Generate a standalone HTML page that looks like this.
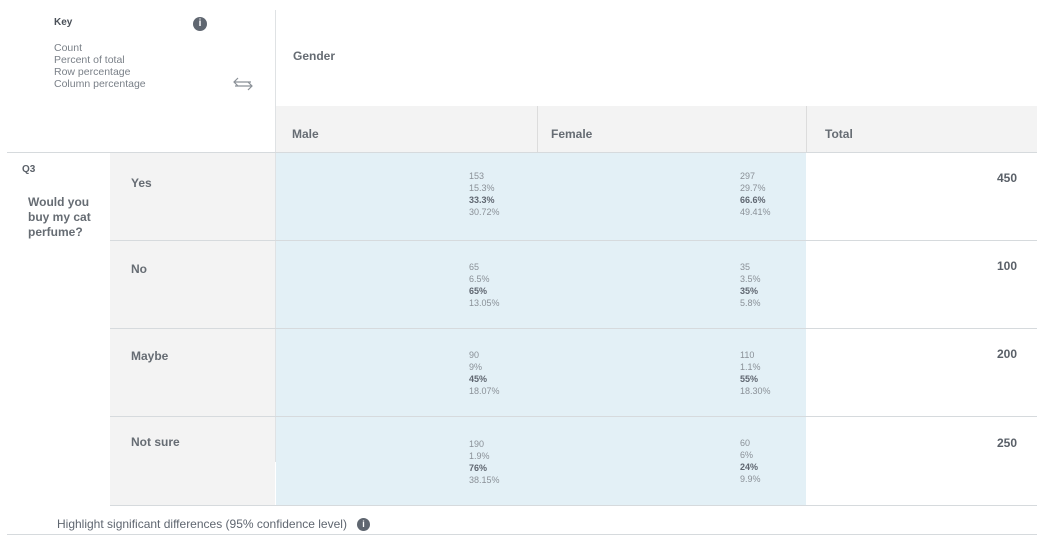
<!DOCTYPE html>
<html><head><style>
body{margin:0;width:1055px;height:550px;background:#fff;font-family:"Liberation Sans",sans-serif;color:#5f6670;position:relative;overflow:hidden}
.a{position:absolute}
.d{position:absolute;font-size:9px;line-height:12px;color:#8a9097}
.d b{color:#5f6670}
.tot{position:absolute;right:38px;font-size:12px;font-weight:bold;color:#5a6068}
.rl{position:absolute;left:131px;font-size:12px;font-weight:bold;color:#666c73}
.hl{position:absolute;height:1px;background:#d6dadd}
</style></head><body>
<div class="a" style="left:54px;top:17px;font-size:10px;font-weight:bold;color:#4a5058">Key</div>
<div class="a" style="left:54px;top:42px;font-size:10.5px;line-height:12px;color:#7a8088">Count<br>Percent of total<br>Row percentage<br>Column percentage</div>
<div class="a" style="left:193px;top:17px;width:14px;height:14px;border-radius:50%;background:#5f6670;color:#fff;font-size:10px;font-weight:bold;text-align:center;line-height:14px">i</div>
<svg class="a" style="left:233px;top:77px" width="20" height="14" viewBox="0 0 20 14"><path d="M5 1 L1 5 L5 9 M1 5 H18 M15 5 L19 9 L15 13 M19 9 H2" fill="none" stroke="#8a9097" stroke-width="1.2"/></svg>
<div class="a" style="left:275px;top:10px;width:1px;height:452px;background:#dfe2e4"></div>
<div class="a" style="left:293px;top:49px;font-size:12px;font-weight:bold;color:#666c73">Gender</div>
<div class="a" style="left:276px;top:106px;width:761px;height:46px;background:#f3f3f3"></div>
<div class="a" style="left:537px;top:106px;width:1px;height:46px;background:#dcdcdc"></div>
<div class="a" style="left:806px;top:106px;width:1px;height:46px;background:#dcdcdc"></div>
<div class="a" style="left:292px;top:127px;font-size:12px;font-weight:bold;color:#666c73">Male</div>
<div class="a" style="left:551px;top:127px;font-size:12px;font-weight:bold;color:#666c73">Female</div>
<div class="a" style="left:825px;top:127px;font-size:12px;font-weight:bold;color:#666c73">Total</div>
<div class="a" style="left:110px;top:152px;width:165px;height:353px;background:#f3f3f3"></div>
<div class="a" style="left:276px;top:152px;width:530px;height:353px;background:#e3f0f6"></div>
<div class="hl" style="left:7px;top:152px;width:1030px"></div>
<div class="hl" style="left:110px;top:240px;width:927px"></div>
<div class="hl" style="left:110px;top:328px;width:927px"></div>
<div class="hl" style="left:110px;top:416px;width:927px"></div>
<div class="hl" style="left:110px;top:505px;width:927px"></div>
<div class="hl" style="left:7px;top:534px;width:1030px"></div>
<div class="a" style="left:22px;top:164px;font-size:10px;font-weight:bold;color:#5a6068">Q3</div>
<div class="a" style="left:28px;top:195px;font-size:12px;line-height:15px;font-weight:bold;color:#666c73">Would you<br>buy my cat<br>perfume?</div>
<div class="rl" style="top:176px">Yes</div>
<div class="rl" style="top:262px">No</div>
<div class="rl" style="top:349px">Maybe</div>
<div class="rl" style="top:435px">Not sure</div>
<div class="d" style="left:469px;top:170px">153<br>15.3%<br><b>33.3%</b><br>30.72%</div>
<div class="d" style="left:740px;top:170px">297<br>29.7%<br><b>66.6%</b><br>49.41%</div>
<div class="d" style="left:469px;top:261px">65<br>6.5%<br><b>65%</b><br>13.05%</div>
<div class="d" style="left:740px;top:261px">35<br>3.5%<br><b>35%</b><br>5.8%</div>
<div class="d" style="left:469px;top:349px">90<br>9%<br><b>45%</b><br>18.07%</div>
<div class="d" style="left:740px;top:349px">110<br>1.1%<br><b>55%</b><br>18.30%</div>
<div class="d" style="left:469px;top:438px">190<br>1.9%<br><b>76%</b><br>38.15%</div>
<div class="d" style="left:740px;top:437px">60<br>6%<br><b>24%</b><br>9.9%</div>
<div class="tot" style="top:171px">450</div>
<div class="tot" style="top:259px">100</div>
<div class="tot" style="top:347px">200</div>
<div class="tot" style="top:436px">250</div>
<div class="a" style="left:57px;top:517px;font-size:12px;color:#5f6670">Highlight significant differences (95% confidence level)</div>
<div class="a" style="left:357px;top:518px;width:13px;height:13px;border-radius:50%;background:#5f6670;color:#fff;font-size:9px;font-weight:bold;text-align:center;line-height:13px">i</div>
</body></html>
